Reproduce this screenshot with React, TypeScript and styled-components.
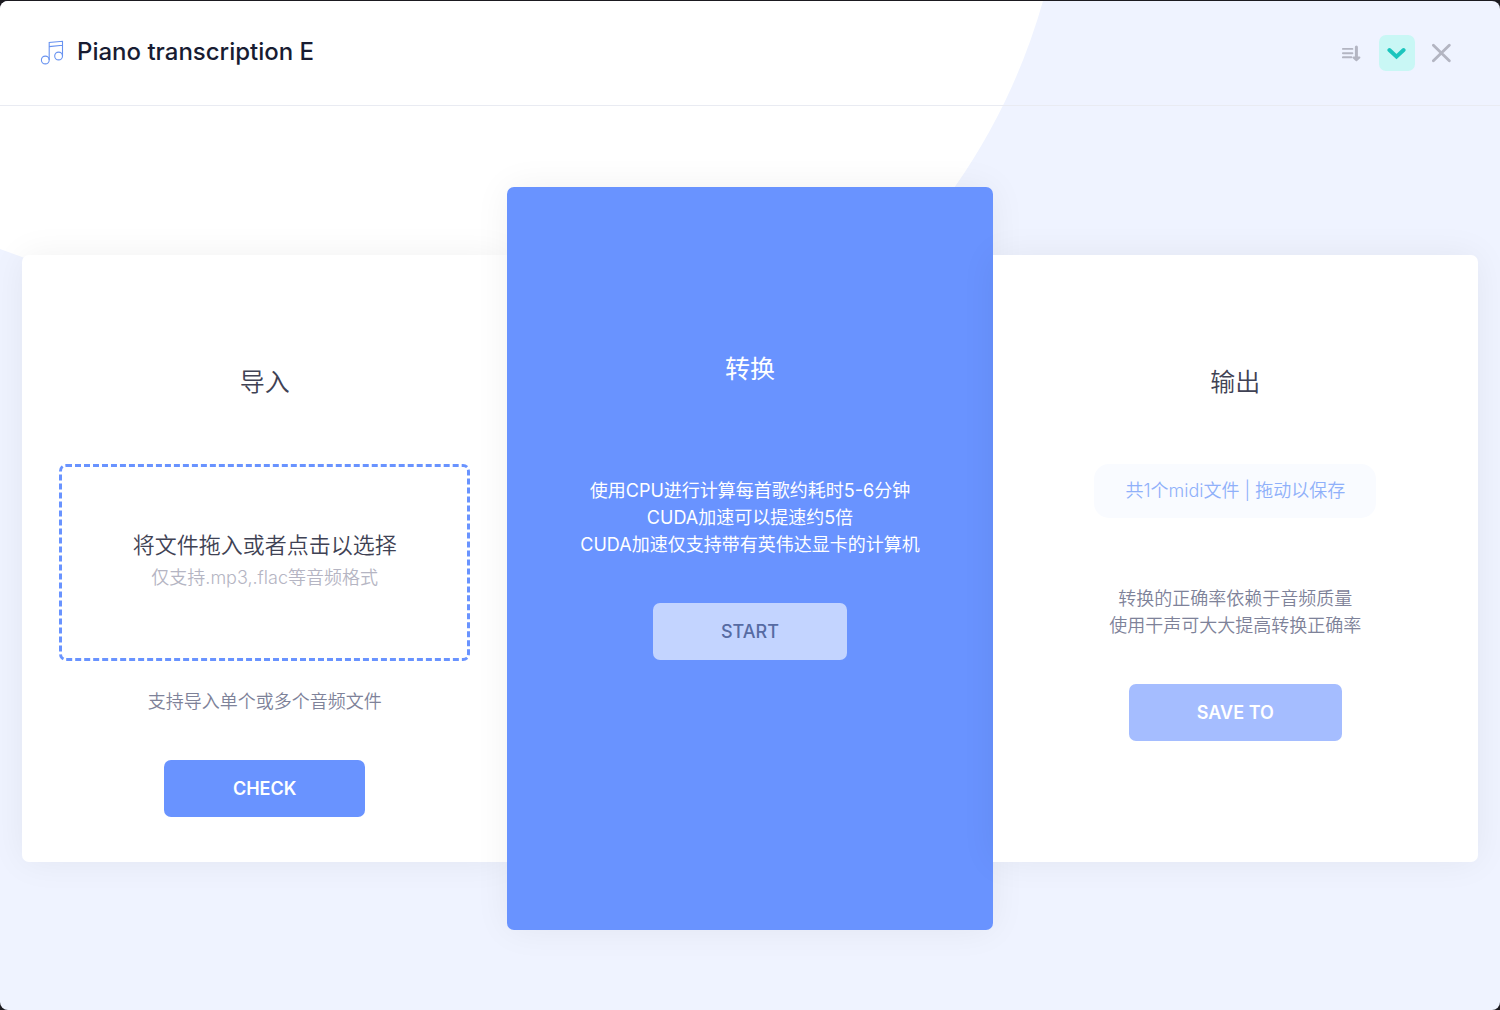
import React from "react";
import styled, { createGlobalStyle } from "styled-components";

const GlobalStyle = createGlobalStyle`
  *, *::before, *::after { box-sizing: border-box; }
  body {
    margin: 0;
    background: #1b1a20;
    font-family: Inter, "Noto Sans CJK SC", sans-serif;
    font-size: 18px;
    line-height: 27px;
    color: #3f4254;
  }
  h1, h2, p { margin: 0; font-weight: 400; }
  button { font: inherit; border: 0; cursor: pointer; }
`;

const Window = styled.div`
  position: relative;
  display: flex;
  flex-direction: column;
  min-height: calc(100vh - 1px);
  margin-top: 1px;
  background: #eff3ff;
  border-radius: 8px;
  overflow: hidden;
`;

const Backdrop = styled.svg`
  position: absolute;
  top: 0;
  left: 0;
`;

const Header = styled.header`
  position: relative;
  display: flex;
  align-items: center;
  justify-content: space-between;
  height: 105px;
  padding: 0 41px 0 40px;
  border-bottom: 1px solid #e9ebf2;
`;

const Brand = styled.div`
  display: flex;
  align-items: center;
  gap: 12px;
  padding-bottom: 2px;
`;

const AppTitle = styled.h1`
  font-size: 24px;
  line-height: 34px;
  font-weight: 450;
  color: #181c32;
`;

const Actions = styled.div`
  display: flex;
  align-items: center;
  gap: 8px;
`;

const IconButton = styled.button<{ $active?: boolean }>`
  display: flex;
  align-items: center;
  justify-content: center;
  width: 36px;
  height: 36px;
  padding: 0;
  border-radius: 7px;
  background: ${(p) => (p.$active ? "#c9f7f5" : "transparent")};
  color: ${(p) => (p.$active ? "#1bc5bd" : "#b3b5c2")};
`;

const Board = styled.main`
  position: relative;
  flex: 1;
  display: grid;
  grid-template-columns: repeat(3, 1fr);
  align-items: center;
  padding: 0 22px;
`;

const Card = styled.section<{ $side?: "left" | "right" }>`
  display: flex;
  flex-direction: column;
  align-items: center;
  min-height: ${(p) => (p.$side ? 607 : 743)}px;
  padding: ${(p) => (p.$side ? "108px 37px 45px" : "163px 37px 45px")};
  border-radius: ${(p) =>
    p.$side === "left" ? "7px 0 0 7px" : p.$side === "right" ? "0 7px 7px 0" : "7px"};
  background: ${(p) => (p.$side ? "#fff" : "#6993ff")};
  color: ${(p) => (p.$side ? "#7e8299" : "#fff")};
  box-shadow: 0 0 36px rgba(0, 0, 0, 0.06);
  text-align: center;
`;

const CardTitle = styled.h2<{ $featured?: boolean }>`
  margin-bottom: ${(p) => (p.$featured ? 89 : 63)}px;
  font-size: 25px;
  line-height: 38px;
  font-weight: ${(p) => (p.$featured ? 400 : 350)};
  color: ${(p) => (p.$featured ? "#fff" : "#3f4254")};
`;

const Note = styled.p<{ $light?: boolean }>`
  margin-bottom: 45px;
  font-weight: ${(p) => (p.$light ? 350 : 400)};
`;

const DropZone = styled.label`
  display: flex;
  flex-direction: column;
  align-items: center;
  justify-content: center;
  align-self: stretch;
  height: 197px;
  margin-bottom: 27px;
  padding-bottom: 7px;
  border: 3px dashed #6993ff;
  border-radius: 7px;
  cursor: pointer;
`;

const FileInput = styled.input`
  position: absolute;
  width: 1px;
  height: 1px;
  opacity: 0;
`;

const DropTitle = styled.span`
  font-size: 22px;
  line-height: 38px;
  font-weight: 350;
  color: #3f4254;
`;

const DropHint = styled.span`
  font-weight: 350;
  color: #b5b5c3;
`;

const Pill = styled.button`
  height: 54px;
  margin-bottom: 67px;
  padding: 0 31px;
  border-radius: 15px;
  background: #f9fbff;
  color: #8fb0fa;
  font-weight: 350;
`;

const ActionButton = styled.button<{ $tone: "solid" | "pale" | "faded"; $width: number }>`
  min-width: ${(p) => p.$width}px;
  height: 57px;
  padding: 0 27px;
  border-radius: 7px;
  font-weight: ${(p) => (p.$tone === "pale" ? 500 : 600)};
  background: ${(p) => ({ solid: "#6993ff", pale: "#c3d4ff", faded: "#a5bdff" })[p.$tone]};
  color: ${(p) => (p.$tone === "pale" ? "#566ba3" : "#fff")};
`;

const MusicIcon = () => (
  <svg width="25" height="25" viewBox="0 0 25 25" fill="none" stroke="#6993f0" strokeWidth="1.1" aria-hidden="true">
    <circle cx="5.3" cy="20" r="3.9" />
    <circle cx="18.6" cy="16" r="3.9" />
    <path d="M9.2 20V2.5L22.5 1.3V16M9.2 6.6L22.5 5.2" />
  </svg>
);

const SortIcon = () => (
  <svg width="22" height="20" viewBox="1 0 22 20" fill="none" stroke="currentColor" strokeLinecap="round" aria-hidden="true">
    <path d="M1.9 5.9H11.4M1.9 10.2H11.4M1.9 14.3H10.4" strokeWidth="1.9" />
    <path d="M15.4 4V14.4" strokeWidth="3" />
    <path d="M12.4 14.6H18.4L15.4 17.2Z" fill="currentColor" strokeWidth="2" strokeLinejoin="round" />
  </svg>
);

const ChevronIcon = () => (
  <svg width="20" height="20" viewBox="0 0 20 20" fill="none" stroke="currentColor" strokeWidth="4" strokeLinecap="round" aria-hidden="true">
    <path d="M2.4 7L9.5 13.6L16.6 7" />
  </svg>
);

const CloseIcon = () => (
  <svg width="20" height="20" viewBox="0 0 20 20" fill="none" stroke="currentColor" strokeWidth="2.8" strokeLinecap="round" aria-hidden="true">
    <path d="M2.4 2.2L18.3 17.8M18.3 2.2L2.4 17.8" />
  </svg>
);

export default function App() {
  return (
    <>
      <GlobalStyle />
      <Window>
        <Backdrop width="1050" height="420" viewBox="0 0 1050 420" aria-hidden="true">
          <path d="M0 0H1043A619 619 0 0 1 954 187C760 460 420 410 22 256L0 248Z" fill="#fff" />
        </Backdrop>
        <Header>
          <Brand>
            <MusicIcon />
            <AppTitle>Piano transcription E</AppTitle>
          </Brand>
          <Actions>
            <IconButton type="button" aria-label="Sort"><SortIcon /></IconButton>
            <IconButton type="button" aria-label="Minimize" $active><ChevronIcon /></IconButton>
            <IconButton type="button" aria-label="Close"><CloseIcon /></IconButton>
          </Actions>
        </Header>
        <Board>
          <Card $side="left">
            <CardTitle>导入</CardTitle>
            <DropZone htmlFor="audio">
              <DropTitle>将文件拖入或者点击以选择</DropTitle>
              <DropHint>仅支持.mp3,.flac等音频格式</DropHint>
              <FileInput id="audio" type="file" accept=".mp3,.flac" multiple />
            </DropZone>
            <Note $light>支持导入单个或多个音频文件</Note>
            <ActionButton type="button" $tone="solid" $width={201}>CHECK</ActionButton>
          </Card>
          <Card>
            <CardTitle $featured>转换</CardTitle>
            <Note>
              使用CPU进行计算每首歌约耗时5-6分钟<br />
              CUDA加速可以提速约5倍<br />
              CUDA加速仅支持带有英伟达显卡的计算机
            </Note>
            <ActionButton type="button" $tone="pale" $width={194}>START</ActionButton>
          </Card>
          <Card $side="right">
            <CardTitle>输出</CardTitle>
            <Pill type="button" draggable>共1个midi文件 | 拖动以保存</Pill>
            <Note $light>
              转换的正确率依赖于音频质量<br />
              使用干声可大大提高转换正确率
            </Note>
            <ActionButton type="button" $tone="faded" $width={213}>SAVE TO</ActionButton>
          </Card>
        </Board>
      </Window>
    </>
  );
}
